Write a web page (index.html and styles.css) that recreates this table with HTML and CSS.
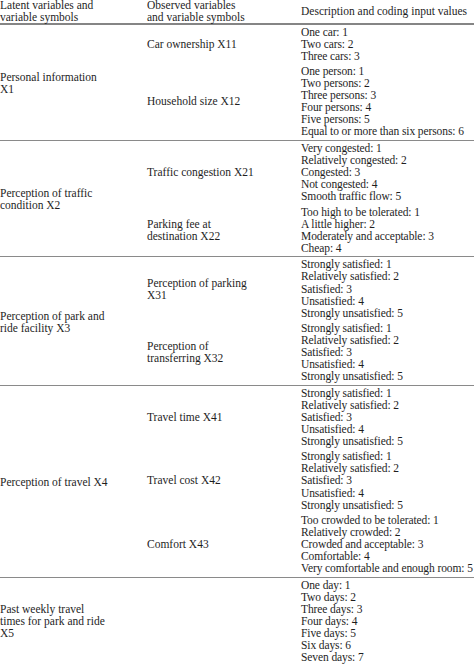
FILE: index.html
```html
<!DOCTYPE html>
<html lang="en">
<head>
<meta charset="utf-8">
<title>Latent variables table</title>
<link rel="stylesheet" href="styles.css">
</head>
<body>
<table class="vars">
  <colgroup>
    <col class="c1"><col class="c2"><col class="c3">
  </colgroup>
  <thead>
    <tr>
      <th>Latent variables and<br>variable symbols</th>
      <th>Observed variables<br>and variable symbols</th>
      <th>Description and coding input values</th>
    </tr>
  </thead>
  <tbody>
    <tr class="first">
      <td rowspan="2" class="latent">Personal information<br>X1</td>
      <td>Car ownership X11</td>
      <td class="desc">One car: 1<br>Two cars: 2<br>Three cars: 3</td>
    </tr>
    <tr class="last">
      <td>Household size X12</td>
      <td class="desc">One person: 1<br>Two persons: 2<br>Three persons: 3<br>Four persons: 4<br>Five persons: 5<br>Equal to or more than six persons: 6</td>
    </tr>
  </tbody>
  <tbody>
    <tr class="first">
      <td rowspan="2" class="latent">Perception of traffic<br>condition X2</td>
      <td>Traffic congestion X21</td>
      <td class="desc">Very congested: 1<br>Relatively congested: 2<br>Congested: 3<br>Not congested: 4<br>Smooth traffic flow: 5</td>
    </tr>
    <tr class="last">
      <td>Parking fee at<br>destination X22</td>
      <td class="desc">Too high to be tolerated: 1<br>A little higher: 2<br>Moderately and acceptable: 3<br>Cheap: 4</td>
    </tr>
  </tbody>
  <tbody>
    <tr class="first">
      <td rowspan="2" class="latent">Perception of park and<br>ride facility X3</td>
      <td>Perception of parking<br>X31</td>
      <td class="desc">Strongly satisfied: 1<br>Relatively satisfied: 2<br>Satisfied: 3<br>Unsatisfied: 4<br>Strongly unsatisfied: 5</td>
    </tr>
    <tr class="last">
      <td>Perception of<br>transferring X32</td>
      <td class="desc">Strongly satisfied: 1<br>Relatively satisfied: 2<br>Satisfied: 3<br>Unsatisfied: 4<br>Strongly unsatisfied: 5</td>
    </tr>
  </tbody>
  <tbody>
    <tr class="first">
      <td rowspan="3" class="latent">Perception of travel X4</td>
      <td>Travel time X41</td>
      <td class="desc">Strongly satisfied: 1<br>Relatively satisfied: 2<br>Satisfied: 3<br>Unsatisfied: 4<br>Strongly unsatisfied: 5</td>
    </tr>
    <tr class="mid">
      <td>Travel cost X42</td>
      <td class="desc">Strongly satisfied: 1<br>Relatively satisfied: 2<br>Satisfied: 3<br>Unsatisfied: 4<br>Strongly unsatisfied: 5</td>
    </tr>
    <tr class="last">
      <td>Comfort X43</td>
      <td class="desc">Too crowded to be tolerated: 1<br>Relatively crowded: 2<br>Crowded and acceptable: 3<br>Comfortable: 4<br>Very comfortable and enough room: 5</td>
    </tr>
  </tbody>
  <tbody>
    <tr class="first last">
      <td class="latent">Past weekly travel<br>times for park and ride<br>X5</td>
      <td></td>
      <td class="desc">One day: 1<br>Two days: 2<br>Three days: 3<br>Four days: 4<br>Five days: 5<br>Six days: 6<br>Seven days: 7</td>
    </tr>
  </tbody>
</table>
</body>
</html>
```

FILE: styles.css
```css
html, body {
  margin: 0;
  padding: 0;
  background: #ffffff;
  overflow: hidden;
}

.vars {
  width: 474px;
  border-collapse: collapse;
  table-layout: fixed;
  font-family: "Liberation Serif", "DejaVu Serif", serif;
  font-size: 11.5px;
  line-height: 12.1px;
  color: #1e1e1e;
  margin-top: -1.5px;
}

.c1 { width: 147px; }
.c2 { width: 154px; }
.c3 { width: 173px; }

.vars th {
  font-weight: normal;
  text-align: left;
  vertical-align: middle;
  padding: 0;
  white-space: nowrap;
  border-bottom: 2px solid #858585;
}

.vars td {
  vertical-align: middle;
  padding: 1.5px 0;
  white-space: nowrap;
}

.vars td.desc {
  letter-spacing: -0.1px;
}

.vars tbody {
  border-top: 1.5px solid #8a8a8a;
}

.vars thead + tbody {
  border-top: none;
}

.vars tr.first td {
  padding-top: 1px;
}

.vars tr.last td {
  padding-bottom: 2.5px;
}

.vars td.latent {
  padding-top: 0;
  padding-bottom: 0;
}
```
